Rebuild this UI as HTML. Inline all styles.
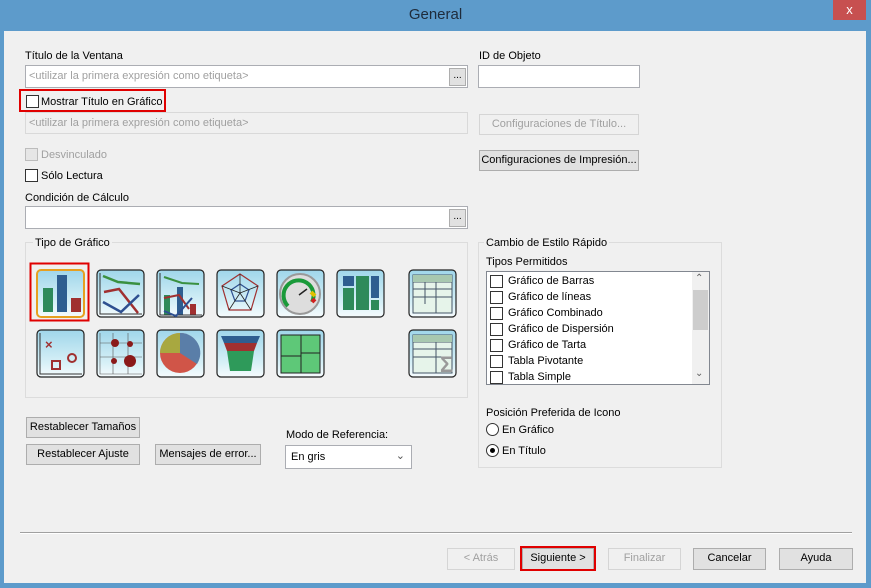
<!DOCTYPE html>
<html><head><meta charset="utf-8"><style>
*{box-sizing:border-box}
body{margin:0;width:871px;height:588px;background:#5d9bcb;font-family:"Liberation Sans",sans-serif;font-size:11px;color:#000;position:relative;overflow:hidden}
.a{position:absolute}
.client{position:absolute;left:4px;top:31px;width:862px;height:552px;background:#f0f0f0}
.title{position:absolute;left:0;top:6px;width:871px;text-align:center;font-size:15px;color:#1e2b3b}
.close{position:absolute;left:833px;top:0;width:33px;height:20px;background:#c75050;color:#fff;text-align:center;font-size:13px;line-height:19px}
.inp{position:absolute;background:#fff;border:1px solid #abadb3;color:#a0a0a0;padding:2px 3px;line-height:16px;white-space:nowrap}
.inp.dis{background:#f0f0f0;border-color:#d9d9d9}
.btn{position:absolute;background:#e1e1e1;border:1px solid #adadad;text-align:center;line-height:19px;white-space:nowrap}
.btn.dis{background:#f0f0f0;border-color:#d5d5d5;color:#a0a0a0}
.dots{position:absolute;width:17px;height:18px;background:#e1e1e1;border:1px solid #adadad;font-size:10px;text-align:center;line-height:14px}
.cb{position:absolute;width:13px;height:13px;background:#fff;border:1px solid #333}
.cb.dis{background:#e6e6e6;border-color:#bcbcbc}
.lbl{position:absolute;white-space:nowrap;line-height:14px}
.grp{position:absolute;border:1px solid #dcdcdc}
.gl{position:absolute;background:#f0f0f0;padding:0 2px;line-height:14px;white-space:nowrap}
.red{position:absolute;border:2px solid #e00000}
.li{position:absolute;left:3px;height:16px;line-height:16px;white-space:nowrap}
.li i{position:absolute;left:0;top:2px;width:13px;height:13px;border:1px solid #333;background:#fff}
.li span{position:absolute;left:18px}
.rad{position:absolute;width:13px;height:13px;border:1px solid #333;border-radius:50%;background:#fff}
</style></head><body>
<div class="title">General</div>
<div class="close">x</div>
<div class="client"></div>

<div class="lbl" style="left:25px;top:49px">Título de la Ventana</div>
<div class="inp" style="left:25px;top:65px;width:443px;height:23px">&lt;utilizar la primera expresión como etiqueta&gt;</div>
<div class="dots" style="left:449px;top:68px">...</div>
<div class="red" style="left:19px;top:89px;width:147px;height:23px"></div>
<div class="cb" style="left:26px;top:95px"></div>
<div class="lbl" style="left:41px;top:95px">Mostrar Título en Gráfico</div>
<div class="inp dis" style="left:25px;top:112px;width:443px;height:22px">&lt;utilizar la primera expresión como etiqueta&gt;</div>
<div class="cb dis" style="left:25px;top:148px"></div>
<div class="lbl" style="left:41px;top:148px;color:#a0a0a0">Desvinculado</div>
<div class="cb" style="left:25px;top:169px"></div>
<div class="lbl" style="left:41px;top:169px">Sólo Lectura</div>
<div class="lbl" style="left:25px;top:191px">Condición de Cálculo</div>
<div class="inp" style="left:25px;top:206px;width:443px;height:23px"></div>
<div class="dots" style="left:449px;top:209px">...</div>

<div class="grp" style="left:25px;top:242px;width:443px;height:156px"></div>
<div class="gl" style="left:33px;top:236px">Tipo de Gráfico</div>

<div class="lbl" style="left:479px;top:49px">ID de Objeto</div>
<div class="inp" style="left:478px;top:65px;width:162px;height:23px"></div>
<div class="btn dis" style="left:479px;top:114px;width:160px;height:21px">Configuraciones de Título...</div>
<div class="btn" style="left:479px;top:150px;width:160px;height:21px">Configuraciones de Impresión...</div>

<div class="grp" style="left:478px;top:242px;width:244px;height:226px"></div>
<div class="gl" style="left:484px;top:236px">Cambio de Estilo Rápido</div>
<div class="lbl" style="left:486px;top:255px">Tipos Permitidos</div>
<div class="a" style="left:486px;top:271px;width:224px;height:114px;background:#fff;border:1px solid #828790">
<div class="li" style="top:1px"><i></i><span>Gráfico de Barras</span></div>
<div class="li" style="top:17px"><i></i><span>Gráfico de líneas</span></div>
<div class="li" style="top:33px"><i></i><span>Gráfico Combinado</span></div>
<div class="li" style="top:49px"><i></i><span>Gráfico de Dispersión</span></div>
<div class="li" style="top:65px"><i></i><span>Gráfico de Tarta</span></div>
<div class="li" style="top:81px"><i></i><span>Tabla Pivotante</span></div>
<div class="li" style="top:97px"><i></i><span>Tabla Simple</span></div>
<div class="a" style="left:205px;top:0;width:17px;height:112px;background:#f0f0f0"></div>
<div class="a" style="left:206px;top:18px;width:15px;height:40px;background:#cdcdcd"></div>
<div class="a" style="left:208px;top:1px;font-size:10px;color:#606060">&#8963;</div>
<div class="a" style="left:208px;top:96px;font-size:10px;color:#606060">&#8964;</div>
</div>
<div class="lbl" style="left:486px;top:406px">Posición Preferida de Icono</div>
<div class="rad" style="left:486px;top:423px"></div>
<div class="lbl" style="left:502px;top:423px">En Gráfico</div>
<div class="rad" style="left:486px;top:444px"><div class="a" style="left:3px;top:3px;width:5px;height:5px;border-radius:50%;background:#000"></div></div>
<div class="lbl" style="left:502px;top:444px">En Título</div>

<div class="btn" style="left:26px;top:417px;width:114px;height:21px">Restablecer Tamaños</div>
<div class="btn" style="left:26px;top:444px;width:114px;height:21px">Restablecer Ajuste</div>
<div class="btn" style="left:155px;top:444px;width:106px;height:21px">Mensajes de error...</div>
<div class="lbl" style="left:286px;top:428px">Modo de Referencia:</div>
<div class="a" style="left:285px;top:445px;width:127px;height:24px;background:#fff;border:1px solid #abadb3;padding:5px 5px">En gris<span class="a" style="right:6px;top:3px;font-size:11px;color:#555">&#8964;</span></div>

<div class="a" style="left:20px;top:532px;width:832px;height:1px;background:#a0a0a0"></div>
<div class="a" style="left:20px;top:533px;width:832px;height:1px;background:#fff"></div>
<div class="btn dis" style="left:447px;top:548px;width:68px;height:22px">&lt; Atrás</div>
<div class="btn" style="left:522px;top:548px;width:72px;height:22px">Siguiente &gt;</div>
<div class="red" style="left:520px;top:546px;width:76px;height:25px"></div>
<div class="btn dis" style="left:608px;top:548px;width:73px;height:22px">Finalizar</div>
<div class="btn" style="left:693px;top:548px;width:73px;height:22px">Cancelar</div>
<div class="btn" style="left:779px;top:548px;width:74px;height:22px">Ayuda</div>

<svg class="a" style="left:0;top:0" width="871" height="588">
<defs>
<linearGradient id="g" x1="0" y1="0" x2="0" y2="1"><stop offset="0" stop-color="#9fd6ea"/><stop offset=".7" stop-color="#d7f0f7"/><stop offset="1" stop-color="#f6fbfd"/></linearGradient>
</defs>
<rect x="30.5" y="263.5" width="58" height="57" fill="none" stroke="#e00000" stroke-width="2"/>
<g stroke="#222" stroke-width="1.2">
<rect x="37" y="270" width="47" height="47" rx="4" fill="url(#g)" stroke="#e6a020" stroke-width="2"/>
<rect x="97" y="270" width="47" height="47" rx="4" fill="url(#g)"/>
<rect x="157" y="270" width="47" height="47" rx="4" fill="url(#g)"/>
<rect x="217" y="270" width="47" height="47" rx="4" fill="url(#g)"/>
<rect x="277" y="270" width="47" height="47" rx="4" fill="url(#g)"/>
<rect x="337" y="270" width="47" height="47" rx="4" fill="url(#g)"/>
<rect x="409" y="270" width="47" height="47" rx="4" fill="url(#g)"/>
<rect x="37" y="330" width="47" height="47" rx="4" fill="url(#g)"/>
<rect x="97" y="330" width="47" height="47" rx="4" fill="url(#g)"/>
<rect x="157" y="330" width="47" height="47" rx="4" fill="url(#g)"/>
<rect x="217" y="330" width="47" height="47" rx="4" fill="url(#g)"/>
<rect x="277" y="330" width="47" height="47" rx="4" fill="url(#g)"/>
<rect x="409" y="330" width="47" height="47" rx="4" fill="url(#g)"/>
</g>
<rect x="43" y="288" width="10" height="24" fill="#2e8a5a"/><rect x="57" y="275" width="10" height="37" fill="#2e5e90"/><rect x="71" y="298" width="10" height="14" fill="#a03030"/>
<g fill="none" stroke-width="2.5"><path d="M100 273v41h42" stroke="#333" stroke-width="1"/><path d="M103 276l15 6 22 2" stroke="#3a9040"/><path d="M104 292l15-3 19 24" stroke="#a03030"/><path d="M103 302l18 10 18-17" stroke="#2e5090"/></g>
<rect x="164" y="295" width="6" height="20" fill="#2e8a5a"/><rect x="177" y="287" width="6" height="28" fill="#2e5e90"/><rect x="190" y="304" width="6" height="11" fill="#a03030"/>
<g fill="none" stroke-width="2"><path d="M160 273v42h42" stroke="#333" stroke-width="1"/><path d="M164 277l18 6 17 1" stroke="#3a9040"/><path d="M164 298l15-3 10 14" stroke="#a03030"/><path d="M164 311l12 5 16-18" stroke="#2e5090"/></g>
<path d="M240 274l18 12-7 24h-22l-7-24z" fill="none" stroke="#a03030" stroke-width="1.2"/><path d="M240 284l9 6-4 11h-10l-4-11z" fill="none" stroke="#2e5090" stroke-width="1.2"/><path d="M240 274v19M258 286l-18 7M251 310l-11-17M229 310l11-17M222 286l18 7" stroke="#222" stroke-width=".8"/>
<circle cx="300" cy="294" r="20" fill="#ddd" stroke="#999" stroke-width="2"/><path d="M288 306a15 15 0 1 1 24-4" fill="none" stroke="#1a9a3a" stroke-width="4"/><path d="M311 292l4 4" stroke="#e0c000" stroke-width="4"/><path d="M312 302l3-3" stroke="#d02020" stroke-width="4"/><path d="M299 295l8-6" stroke="#222" stroke-width="1.5"/>
<rect x="343" y="276" width="11" height="10" fill="#2e5e90"/><rect x="343" y="288" width="11" height="22" fill="#2e8a5a"/><rect x="356" y="276" width="13" height="34" fill="#2e8a5a"/><rect x="371" y="276" width="8" height="22" fill="#2e5e90"/><rect x="371" y="300" width="8" height="10" fill="#2e8a5a"/>
<g fill="none" stroke="#456" stroke-width="1"><rect x="413" y="275" width="39" height="38" fill="#e6f4ea"/><path d="M413 282h39M413 289h39M413 297h39M436 275v38M425 282v22"/><rect x="413" y="335" width="39" height="38" fill="#e6f4ea"/><path d="M413 342h39M413 349h39M413 357h39M436 335v38"/></g>
<rect x="413" y="275" width="39" height="7" fill="#a8c8b0"/><rect x="413" y="335" width="39" height="7" fill="#a8c8b0"/>
<text x="440" y="372" font-size="22" font-weight="bold" fill="#999" font-family="Liberation Sans">&#931;</text>
<path d="M40 333v41h42" fill="none" stroke="#333"/><text x="45" y="349" font-size="13" font-weight="bold" fill="#a03030" font-family="Liberation Sans">×</text><circle cx="72" cy="358" r="4" fill="none" stroke="#a03030" stroke-width="2"/><rect x="52" y="361" width="8" height="8" fill="none" stroke="#a03030" stroke-width="2"/>
<path d="M100 333v41h42M100 343h42M100 357h42M113 333v41M128 333v41" fill="none" stroke="#555" stroke-width=".6"/><circle cx="115" cy="343" r="4" fill="#8a1a1a"/><circle cx="130" cy="344" r="3" fill="#8a1a1a"/><circle cx="114" cy="361" r="3" fill="#8a1a1a"/><circle cx="130" cy="361" r="6" fill="#8a1a1a"/>
<circle cx="180" cy="353" r="20" fill="#d05548"/><path d="M180 353v-20a20 20 0 0 1 17 31z" fill="#5a7ea8"/><path d="M180 353v-20a20 20 0 0 0-20 20z" fill="#a8a840"/>
<path d="M221 336h39l-3 7h-33z" fill="#2e5e90"/><path d="M224 343h33l-3 8h-27z" fill="#a03030"/><path d="M227 351h27l-3 20h-21z" fill="#2e9a5a"/>
<rect x="281" y="335" width="39" height="38" fill="#5ec878" stroke="#222"/><path d="M301 335v38M281 356h20M301 353h19" stroke="#222"/>
</svg>
</body></html>
